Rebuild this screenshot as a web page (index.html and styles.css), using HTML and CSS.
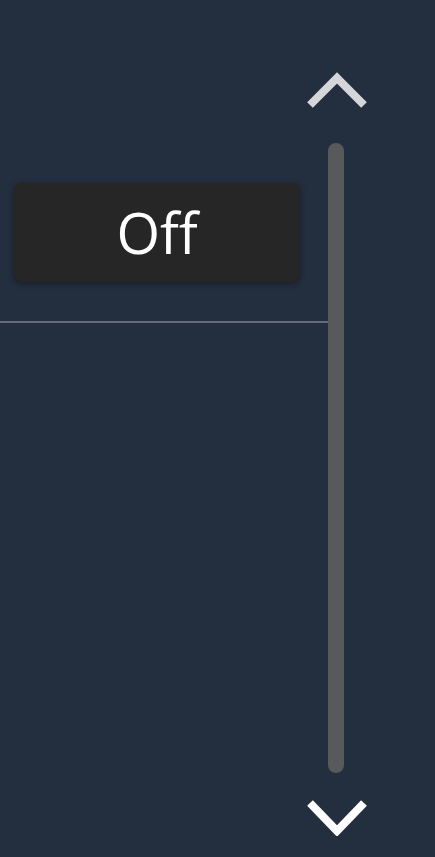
FILE: index.html
```html
<!DOCTYPE html>
<html lang="en">
<head>
  <meta charset="UTF-8">
  <title>Setting</title>
  <link rel="stylesheet" href="styles.css">
</head>
<body>
  <div class="page">
    <div class="settings">
      <div class="setting-row">
        <button class="toggle-button">Off</button>
      </div>
    </div>

    <div class="scroller">
      <svg class="arrow arrow-up" width="64" height="40" viewBox="0 0 64 40">
        <polyline points="5,37 32,10 59,37" />
      </svg>
      <div class="track"></div>
      <svg class="arrow arrow-down" width="64" height="40" viewBox="0 0 64 40">
        <polyline points="5,7 32,35 59,7" />
      </svg>
    </div>
  </div>
</body>
</html>
```

FILE: styles.css
```css
body {
  margin: 0;
  background: #232e3e;
  font-family: "Open Sans", "Noto Sans", sans-serif;
  color: white;
  overflow: hidden;
}

.page {
  display: flex;
  height: 857px;
}

.settings {
  flex: 0 0 328px;
  padding-top: 183px;
}

.setting-row {
  padding-left: 14px;
  padding-bottom: 39px;
  border-bottom: 2px solid #646c7c;
}

.toggle-button {
  display: block;
  width: 286px;
  height: 99px;
  padding: 0;
  border: none;
  border-radius: 8px;
  background: #262626;
  box-shadow: 0 2px 6px rgba(0,0,0,0.35);
  color: white;
  font-family: "Open Sans", "Noto Sans", sans-serif;
  font-size: 56px;
  line-height: 99px;
  cursor: pointer;
}

.scroller {
  flex: 0 0 64px;
  margin-left: -23px;
  display: flex;
  flex-direction: column;
  align-items: center;
  padding-top: 68px;
}

.arrow {
  display: block;
  flex-shrink: 0;
}

.arrow polyline {
  fill: none;
  stroke-width: 8;
  stroke-linejoin: miter;
  stroke-linecap: butt;
}

.arrow-up polyline {
  stroke: #d4d6d9;
}

.arrow-down polyline {
  stroke: #ffffff;
}

.track {
  width: 16px;
  height: 630px;
  margin: 35px 0 23px;
  margin-left: -2px;
  border-radius: 8px;
  background: #58595b;
}
```
